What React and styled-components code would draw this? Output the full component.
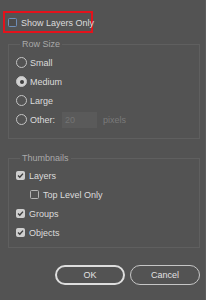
import React from "react";
import styled, { createGlobalStyle } from "styled-components";

const GlobalStyle = createGlobalStyle`
  html, body {
    margin: 0;
    padding: 0;
    background: #535353;
  }
  body {
    font-family: "Liberation Sans", Arial, sans-serif;
    font-size: 9px;
    color: #dcdcdc;
  }
`;

const Dialog = styled.div`
  width: 206px;
  height: 300px;
  box-sizing: border-box;
  padding-top: 11px;
  display: flex;
  flex-direction: column;
  border-right: 1px solid #5b5b5b;
`;

const Highlight = styled.div`
  margin-left: 3px;
  width: 90px;
  height: 22px;
  box-sizing: border-box;
  border: 2px solid #e3121c;
  display: flex;
  align-items: center;
  gap: 4px;
  padding-left: 3px;
  padding-top: 1px;
`;

const Box = styled.span`
  width: 9px;
  height: 9px;
  box-sizing: border-box;
  border-radius: 1.5px;
  flex: none;
  display: inline-flex;
  align-items: center;
  justify-content: center;
  border: 1px solid ${(p) => (p.$focus ? "#6f8fb8" : p.$checked ? "#cfcfcf" : "#b4b4b4")};
  background: ${(p) => (p.$checked ? "#cfcfcf" : p.$focus ? "#4c4c4c" : "transparent")};
`;

const Radio = styled.span`
  width: 11px;
  height: 11px;
  box-sizing: border-box;
  border-radius: 50%;
  flex: none;
  display: inline-flex;
  align-items: center;
  justify-content: center;
  border: 1px solid #c4c4c4;
  background: ${(p) => (p.$checked ? "#d2d2d2" : "transparent")};
  &::after {
    content: "";
    display: ${(p) => (p.$checked ? "block" : "none")};
    width: 4px;
    height: 4px;
    border-radius: 50%;
    background: #3e3e3e;
  }
`;

const Group = styled.fieldset`
  margin: ${(p) => p.$top}px 0 0 8px;
  width: 192px;
  box-sizing: border-box;
  border: 1px solid #5f5f5f;
  padding: ${(p) => p.$pt}px 0 ${(p) => p.$pb}px 7px;
  min-width: 0;
`;

const Legend = styled.legend`
  margin-left: 4px;
  padding: 0 2px;
  color: #a9a9a9;
  line-height: 11px;
`;

const Row = styled.div`
  height: 19px;
  display: flex;
  align-items: center;
  gap: ${(p) => p.$gap || 3}px;
  padding-left: ${(p) => p.$indent || 0}px;
`;

const Label = styled.span`
  color: ${(p) => (p.$dim ? "#7a7a7a" : "#dcdcdc")};
  white-space: nowrap;
`;

const NumberField = styled.span`
  width: 35px;
  height: 16px;
  box-sizing: border-box;
  background: #5a5a5a;
  color: #747474;
  padding-left: 3px;
  display: inline-flex;
  align-items: center;
  margin: 0 3px 0 4px;
`;

const Buttons = styled.div`
  margin-top: 17px;
  display: flex;
  justify-content: flex-end;
  gap: 5px;
  padding-right: 5px;
`;

const Button = styled.div`
  width: 70px;
  height: 20px;
  box-sizing: border-box;
  border-radius: 10px;
  border: ${(p) => (p.$primary ? "2px solid #dedede" : "1.5px solid #c6c6c6")};
  display: flex;
  align-items: center;
  justify-content: center;
  color: #e2e2e2;
`;

const Check = () => (
  <svg width="7" height="7" viewBox="0 0 7 7">
    <path d="M1 3.6 L2.8 5.3 L6 1.6" fill="none" stroke="#3c3c3c" strokeWidth="1.4" />
  </svg>
);

const CheckItem = ({ label, checked, indent }) => (
  <Row $gap={4} $indent={indent}>
    <Box $checked={checked}>{checked && <Check />}</Box>
    <Label>{label}</Label>
  </Row>
);

const RadioItem = ({ label, checked, children }) => (
  <Row>
    <Radio $checked={checked} />
    <Label>{label}</Label>
    {children}
  </Row>
);

export default function App() {
  return (
    <>
      <GlobalStyle />
      <Dialog>
        <Highlight>
          <Box $focus />
          <Label>Show Layers Only</Label>
        </Highlight>

        <Group $top={6} $pt={3} $pb={9}>
          <Legend>Row Size</Legend>
          <RadioItem label="Small" />
          <RadioItem label="Medium" checked />
          <RadioItem label="Large" />
          <RadioItem label="Other:">
            <NumberField>20</NumberField>
            <Label $dim>pixels</Label>
          </RadioItem>
        </Group>

        <Group $top={14} $pt={2} $pb={5}>
          <Legend>Thumbnails</Legend>
          <CheckItem label="Layers" checked />
          <CheckItem label="Top Level Only" indent={14} />
          <CheckItem label="Groups" checked />
          <CheckItem label="Objects" checked />
        </Group>

        <Buttons>
          <Button $primary>OK</Button>
          <Button>Cancel</Button>
        </Buttons>
      </Dialog>
    </>
  );
}
